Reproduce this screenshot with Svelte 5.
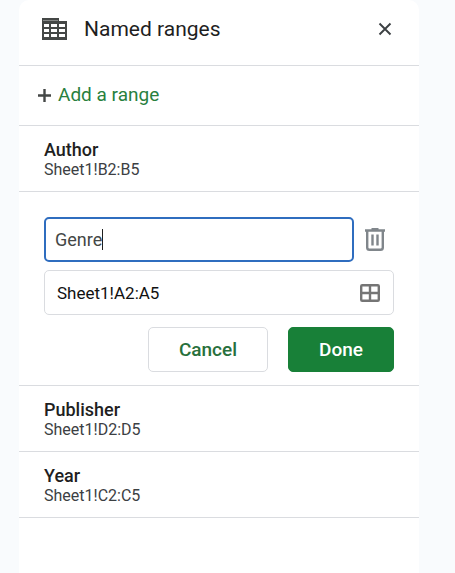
<script>
  import { onMount } from "svelte";

  let nameInput;
  let draft = { name: "Genre", range: "Sheet1!A2:A5" };

  let before = [{ name: "Author", range: "Sheet1!B2:B5" }];
  let after = [
    { name: "Publisher", range: "Sheet1!D2:D5" },
    { name: "Year", range: "Sheet1!C2:C5" },
  ];

  // Start with the name field ready for typing
  onMount(() => {
    nameInput.focus();
    nameInput.setSelectionRange(draft.name.length, draft.name.length);
  });
</script>

<aside class="panel">
  <header class="header">
    <svg class="logo" width="26" height="22" viewBox="0 0 26 22" aria-hidden="true">
      <path fill="#444746" fill-rule="evenodd" d="M1 0h17v3h8v19H1zM3 6v3h5V6zM10 6v3h6V6zM18 6v3h6V6zM3 11v3h5v-3zM10 11v3h6v-3zM18 11v3h6v-3zM3 16v3h5v-3zM10 16v3h6v-3zM18 16v3h6v-3z" />
      <path d="M2 2.5h15" stroke="#858786" stroke-width="1" />
    </svg>
    <h1>Named ranges</h1>
    <button class="icon-btn" aria-label="Close">
      <svg width="14" height="14" viewBox="0 0 14 14">
        <path d="M1.5 1.5l11 11M12.5 1.5l-11 11" stroke="#3c4043" stroke-width="1.9" />
      </svg>
    </button>
  </header>

  <div class="add-row">
    <button class="add-btn">
      <svg width="13" height="13" viewBox="0 0 13 13" aria-hidden="true">
        <path d="M6.5 0v13M0 6.5h13" stroke="#444746" stroke-width="2.4" />
      </svg>
      Add a range
    </button>
  </div>

  {#each before as item}
    <div class="item">
      <div class="item-name">{item.name}</div>
      <div class="item-range">{item.range}</div>
    </div>
  {/each}

  <form class="editor" on:submit|preventDefault>
    <div class="name-row">
      <div class="name-field">
        <input class="name-input" aria-label="Range name" bind:this={nameInput} bind:value={draft.name} />
        <!-- hidden copy of the text keeps the caret at its end -->
        <div class="caret-layer" aria-hidden="true">
          <span class="caret-text">{draft.name}</span><span class="caret"></span>
        </div>
      </div>
      <button type="button" class="icon-btn" aria-label="Delete range">
        <svg width="20" height="23" viewBox="0 0 20 23" fill="none" stroke="#80868b">
          <path d="M0 2.5h20M6.5 1h7" stroke-width="2.4" />
          <path d="M2.2 3v16.5q0 2.3 2.3 2.3h11q2.3 0 2.3-2.3V3" stroke-width="2.4" />
          <path d="M7.5 6.5v11M12.5 6.5v11" stroke-width="2.4" />
        </svg>
      </button>
    </div>

    <div class="range-box">
      <input class="range-input" aria-label="Cell range" bind:value={draft.range} />
      <button type="button" class="icon-btn" aria-label="Select data range">
        <svg width="20" height="18" viewBox="0 0 20 18" fill="none" stroke="#757575" stroke-width="2.4">
          <rect x="1.2" y="1.2" width="17.6" height="15.6" rx="1" />
          <path d="M10 1v16M1 9h18" />
        </svg>
      </button>
    </div>

    <div class="actions">
      <button type="button" class="btn cancel-btn">Cancel</button>
      <button type="submit" class="btn done-btn">Done</button>
    </div>
  </form>

  {#each after as item}
    <div class="item">
      <div class="item-name">{item.name}</div>
      <div class="item-range">{item.range}</div>
    </div>
  {/each}
</aside>

<style>
  :global(body) {
    background: #f9fbfd;
    font-family: Roboto, Arial, sans-serif;
  }

  .panel {
    box-sizing: border-box;
    min-height: 100vh;
    margin: 0 36px 0 19px;
    background: #fff;
    border-radius: 10px 10px 0 0;
  }

  .header {
    display: flex;
    align-items: center;
    height: 58px;
    padding: 0 27px 7px 22px;
    border-bottom: 1px solid #dadce0;
  }

  h1 {
    flex: 1;
    margin: 0 0 0 17px;
    font-size: 21px;
    font-weight: 400;
    line-height: 24px;
    color: #1f1f1f;
  }

  button {
    font-family: inherit;
    cursor: pointer;
  }

  .icon-btn {
    display: flex;
    padding: 0;
    border: none;
    background: none;
  }

  .add-row {
    padding: 17px 19px 18px;
    border-bottom: 1px solid #dadce0;
  }

  .add-btn {
    display: flex;
    align-items: center;
    gap: 7px;
    padding: 0;
    border: none;
    background: none;
    font-size: 19px;
    line-height: 24px;
    color: #28803e;
  }

  .item {
    padding: 14px 25px 11px;
    border-bottom: 1px solid #dadce0;
  }

  .item-name {
    font-size: 18px;
    font-weight: 500;
    line-height: 20px;
    color: #1f1f1f;
  }

  .item-range {
    font-size: 16px;
    line-height: 20px;
    color: #3c4043;
  }

  .editor {
    display: flex;
    flex-direction: column;
    gap: 8px;
    padding: 25px 25px 13px;
    border-bottom: 1px solid #dadce0;
  }

  .name-row {
    display: flex;
    align-items: center;
    gap: 11px;
    padding-right: 9px;
  }

  .name-field {
    position: relative;
    display: flex;
    flex: 1;
    min-width: 0;
  }

  input {
    box-sizing: border-box;
    flex: 1;
    min-width: 0;
    font-family: inherit;
    outline: none;
  }

  .name-input {
    height: 45px;
    padding: 0 9px;
    border: 2px solid #2f6dbf;
    border-radius: 5px;
    font-size: 18px;
    color: #444746;
    caret-color: transparent;
  }

  .caret-layer {
    position: absolute;
    inset: 0 11px;
    display: flex;
    align-items: center;
    overflow: hidden;
    font-size: 18px;
    pointer-events: none;
  }

  .caret-text {
    visibility: hidden;
    white-space: pre;
  }

  .caret {
    width: 1px;
    height: 21px;
    background: #1f1f1f;
  }

  .range-box {
    display: flex;
    align-items: center;
    box-sizing: border-box;
    height: 45px;
    padding: 0 13px 0 12px;
    border: 1px solid #dadce0;
    border-radius: 5px;
  }

  .range-input {
    padding: 0;
    border: none;
    font-size: 17px;
    color: #111;
  }

  .actions {
    display: flex;
    justify-content: flex-end;
    gap: 20px;
    padding-top: 4px;
  }

  .btn {
    height: 45px;
    padding: 0 30px;
    border: 1px solid #dadce0;
    border-radius: 5px;
    font-size: 19px;
    font-weight: 500;
  }

  .cancel-btn {
    background: #fff;
    color: #28703c;
  }

  .done-btn {
    border-color: #188038;
    background: #188038;
    color: #fff;
  }
</style>
